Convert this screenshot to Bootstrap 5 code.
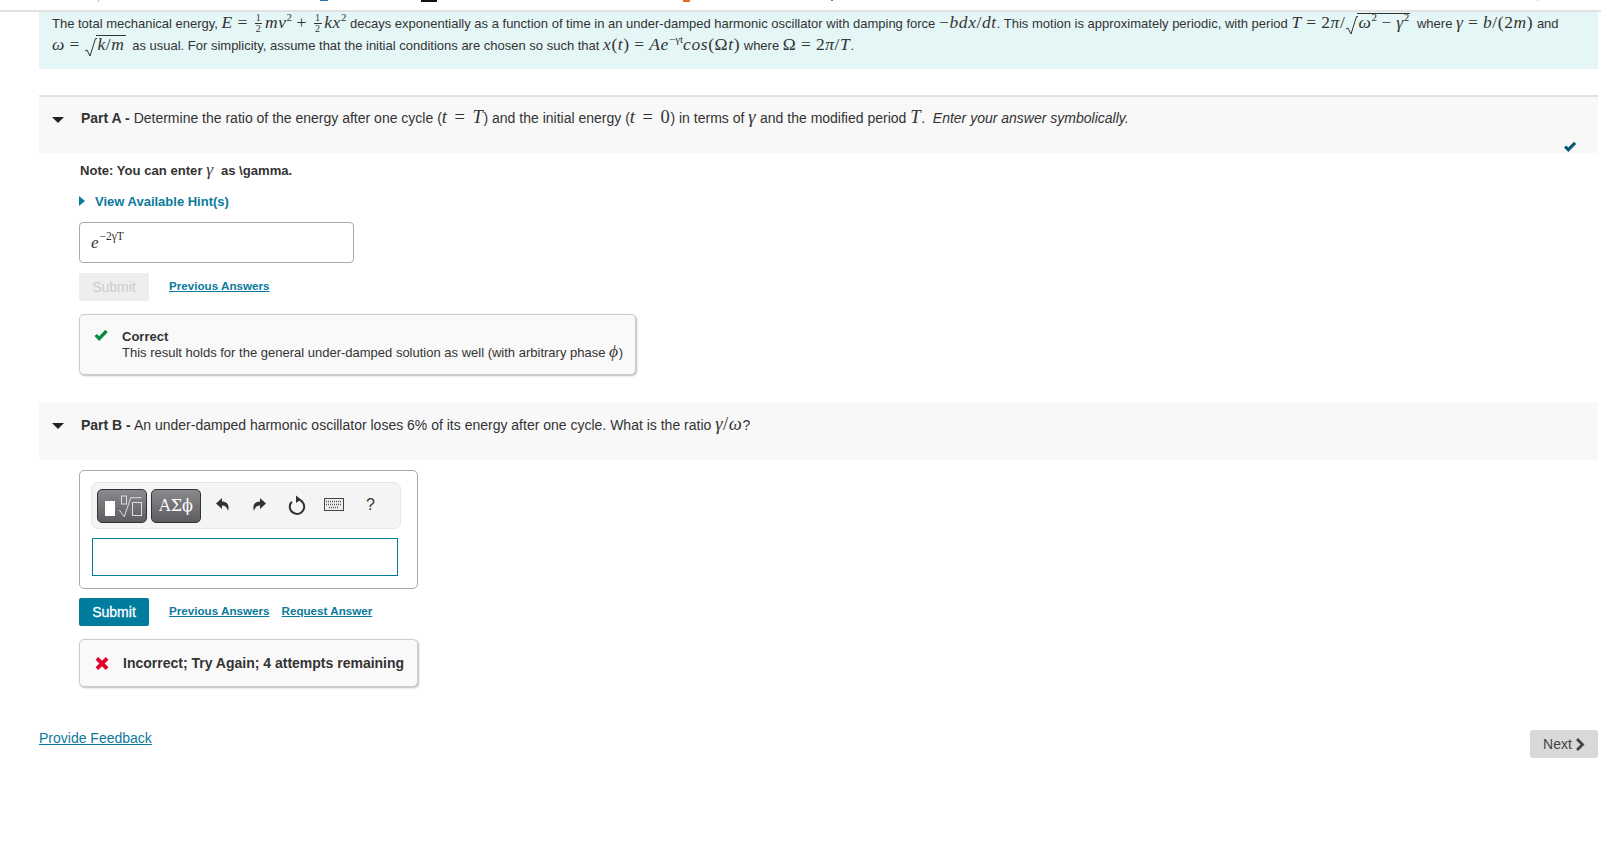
<!DOCTYPE html>
<html lang="en"><head><meta charset="utf-8"><title>Part</title>
<link href="https://cdn.jsdelivr.net/npm/bootstrap@5.3.0/dist/css/bootstrap.min.css" rel="stylesheet">
<style>
html,body{background:#fff;height:100%}
body{font-family:"Liberation Sans",Arial,sans-serif;font-size:14px;color:#333;overflow:hidden}
.topstrip{height:12px;border-bottom:2px solid #e2e2e2}
.wrap-main{margin:0 3px 0 39px}
.intro{background:#e5f6f6;padding:1px 13px 0;height:57px;line-height:22px;font-size:13px}
.m{font-family:"Liberation Serif",serif;font-style:italic;font-size:17.5px;line-height:1;letter-spacing:.6px;color:#333;white-space:nowrap}
.m .u{font-style:normal}
.m .op{font-style:normal;margin:0 4.5px}
.m sup{font-size:11px;top:-.6em;font-style:normal;line-height:0;letter-spacing:0}
.frac{display:inline-flex;flex-direction:column;align-items:center;vertical-align:middle;font-size:10px;line-height:10px;font-style:normal;margin:-2px 2.500px}
.frac>span:first-child{border-bottom:1px solid #333;padding:0 1px}
.rad{display:inline-block;border-top:1px solid #333;line-height:16px;padding:0 1px;margin:-1px 3px -1px -1px}
.radsign{vertical-align:-5px;margin:-4px 0}
.parthead{background:#f8f8f8;height:58px;display:flex;align-items:flex-start;padding:10px 0 0 13px;font-size:14px;line-height:22px;position:relative}
.parthead .op{margin:0 7px}
.parthead .m{line-height:0;font-size:18.5px}
.parta{border-top:2px solid #e2e2e2;margin-top:26px}
.partb{margin-top:27px;padding-top:12px}
.caret-d{width:0;height:0;border-left:6px solid transparent;border-right:6px solid transparent;border-top:6px solid #222;margin:10px 17px 0 0;flex:none}
.partb .caret-d{margin-top:9px}
.caret-r{width:0;height:0;border-top:5px solid transparent;border-bottom:5px solid transparent;border-left:6px solid #0a7a9c;display:inline-block;margin-right:10px}
.partbody{padding:0 0 0 40px}
.oktick{position:absolute;right:21px;top:44px}
.notev{font-weight:700;font-size:13.1px;line-height:18px;margin:9px 0 0 1px}
.notev .m{line-height:0}
.hint{font-weight:700;font-size:13px;color:#0a7a9c;line-height:18px;margin-top:13px}
.ansbox{width:275px;height:41px;border:1px solid #aaa;border-radius:4px;margin-top:11px;padding:10px 11px 0}
.ansbox .m{font-size:17px;letter-spacing:0}
.ansbox .m sup{top:-.72em;font-size:11.500px;margin-left:1px}
.btnp{width:70px;height:28px;padding:0;font-size:14px;border-radius:2px;border:0;line-height:28px;font-family:inherit}
.btn-sub{background:#007c9f;color:#fff;-webkit-text-stroke:.3px #fff}
.btn-sub:hover{background:#007c9f;color:#fff}
.btn-dis{background:#eee;color:#ccc}
.lnk{color:#0a7a9c;font-weight:700;font-size:11.65px;margin-bottom:2px}
.rowb{display:flex;align-items:center;margin-top:10px;height:28px}
.rowb.tight{margin-top:9px}
.rowb .lnk{margin-left:20px}
.rowb .lnk+.lnk{margin-left:12px}
.fb{border:1px solid #ccc;border-radius:5px;background:#f9f9f9;box-shadow:1px 1px 2px #bbb;display:flex}
.fb-ok{width:557px;height:61px;margin-top:13px;padding:14px 0 0 13px;font-size:13px;line-height:16px}
.fb-ok .m{line-height:0}
.fb-ok .txt{margin-left:5px}
.fb-bad{width:339px;height:48px;margin-top:13px;padding:0 0 0 14px;align-items:center;font-size:14px;font-weight:700}
.fb-bad .txt{margin-left:5px}
.editor{width:339px;height:119px;border:1px solid #aaa;border-radius:5px;margin-top:10px;padding:11px 11px 0 11px}
.tbar{background:#f4f4f4;border:1px solid #e6e6e6;border-radius:7px;height:47px;width:310px;display:flex;align-items:center;padding:0 0 0 5px}
.palbtn{width:50px;height:34px;border:1px solid #333;border-radius:5px;background:linear-gradient(#8a8a8e,#5d5d61);display:flex;align-items:center;justify-content:center;color:#fff;margin-right:4px;font-family:"DejaVu Serif",serif;font-size:16px;flex:none}
.palbtn+.palbtn{margin-right:3px}
.tool{width:37px;display:flex;justify-content:center;align-items:center;flex:none;color:#333;margin-top:-2px}
.tool.q{font-size:16px}
.mathin{width:306px;height:38px;border:1px solid #007c9f;margin-top:9px;margin-left:1px;background:#fff}
.foot{display:flex;justify-content:space-between;align-items:flex-start;margin-top:42px}
.fblink{color:#0a7a9c;font-size:14px;line-height:19px}
.nextb{width:68px;height:28px;margin-top:1px;background:#d9d9d9;color:#444;border-radius:3px;display:flex;align-items:center;justify-content:center;gap:4px;font-size:14px}
.topbits{display:flex;height:2px;align-items:flex-start}
.bit{display:block;height:2px;flex:none}
.b1{margin-left:98px;width:1px;background:#b9b3e8}
.b2{margin-left:221px;width:8px;height:1px;background:#1f78b4}
.b3{margin-left:93px;width:16px;background:#111}
.b4{margin-left:246px;width:7px;background:#f26522}
.b5{margin-left:141px;width:2px;height:1px;background:#7a6fd0}
.b6{margin-left:704px;width:1px;height:1px;background:#bbb}
</style></head><body>
<div class="topstrip"><div class="topbits"><span class="bit b1"></span><span class="bit b2"></span><span class="bit b3"></span><span class="bit b4"></span><span class="bit b5"></span><span class="bit b6"></span></div></div>
<div class="wrap-main">
<div class="intro">The total mechanical energy, <span class="m">E<span class="op">=</span><span class="frac"><span>1</span><span>2</span></span>mv<sup>2</sup><span class="op">+</span><span class="frac"><span>1</span><span>2</span></span>kx<sup>2</sup></span> decays exponentially as a function of time in an under-damped harmonic oscillator with damping force <span class="m"><span class="u">−</span>bdx<span class="u">/</span>dt</span>. This motion is approximately periodic, with period <span class="m">T<span class="op">=</span><span class="u">2</span>π<span class="u">/</span><svg class="radsign" width="13" height="21" viewBox="0 0 13 21"><path d="M1 13l2-1 3 6L11.500.5H13" fill="none" stroke="#333"/></svg><span class="rad">ω<sup>2</sup><span class="op">−</span>γ<sup>2</sup></span></span> where <span class="m">γ<span class="op">=</span>b<span class="u">/(2</span>m<span class="u">)</span></span> and<br><span class="m">ω<span class="op">=</span><svg class="radsign" width="13" height="21" viewBox="0 0 13 21"><path d="M1 13l2-1 3 6L11.500.5H13" fill="none" stroke="#333"/></svg><span class="rad">k<span class="u">/</span>m</span></span> as usual. For simplicity, assume that the initial conditions are chosen so such that <span class="m">x<span class="u">(</span>t<span class="u">)</span><span class="op">=</span>Ae<sup>−γt</sup>cos<span class="u">(Ω</span>t<span class="u">)</span></span> where <span class="m"><span class="u">Ω</span><span class="op">=</span><span class="u">2</span>π<span class="u">/</span>T</span>.</div>

<div class="parthead parta"><span class="caret-d"></span><div><b>Part A -</b> Determine the ratio of the energy after one cycle (<span class="m">t<span class="op">=</span>T</span>) and the initial energy (<span class="m">t<span class="op">=</span><span class="u">0</span></span>) in terms of <span class="m">γ</span> and the modified period <span class="m">T</span>. &nbsp;<i>Enter your answer symbolically.</i></div>
<svg class="oktick" width="14" height="12" viewBox="0 0 14 12"><path d="M1 6.500 3.200 4.500 5.300 6.600 11 .8 13.200 3 5.300 11z" fill="#04586f"/></svg></div>
<div class="partbody">
<div class="notev">Note: You can enter <span class="m fw-normal">γ</span> &nbsp;as \gamma.</div>
<div class="hint"><span class="caret-r"></span>View Available Hint(s)</div>
<div class="ansbox"><span class="m">e<sup>−2γT</sup></span></div>
<div class="rowb"><button class="btnp btn-dis" disabled>Submit</button><a class="lnk" href="#">Previous Answers</a></div>
<div class="fb fb-ok"><svg width="16" height="13" viewBox="0 0 14 12" class="flex-none me-2"><path d="M1 6.500 3.200 4.500 5.300 6.600 11 .8 13.200 3 5.300 11z" fill="#0a8a3c"/></svg><div class="txt"><b>Correct</b><br>This result holds for the general under-damped solution as well (with arbitrary phase <span class="m">ϕ</span>)</div></div>
</div>
<div class="parthead partb"><span class="caret-d"></span><div><b>Part B -</b> An under-damped harmonic oscillator loses 6% of its energy after one cycle. What is the ratio <span class="m">γ<span class="u">/</span>ω</span>?</div></div>
<div class="partbody">
<div class="editor">
<div class="tbar">
<div class="palbtn"><svg width="44" height="30" viewBox="0 0 44 30"><rect x="5" y="10" width="10" height="15" fill="#fff"/><rect x="21.500" y="5" width="5" height="8" fill="none" stroke="#ddd"/><path d="M19.300 19l5 6.700L30.700 6.700h11" fill="none" stroke="#ddd"/><rect x="32.500" y="11.500" width="9" height="13" fill="none" stroke="#ddd"/></svg></div>
<div class="palbtn">ΑΣϕ</div>
<div class="tool"><svg width="15" height="15" viewBox="0 0 15 15"><path d="M7 1 1 6.500 7 12V8.500c3 0 5 1.500 6 5.500 2-6-1-9.500-6-9.500z" fill="#333"/></svg></div>
<div class="tool"><svg width="15" height="15" viewBox="0 0 15 15"><path d="M8 1l6 5.500L8 12V8.500c-3 0-5 1.500-6 5.500C0 8 3 4.500 8 4.500z" fill="#333"/></svg></div>
<div class="tool"><svg width="18" height="20" viewBox="0 0 18 20"><path d="M9 4.500a7.200 7.200 0 1 1-5.200 2.200" fill="none" stroke="#333" stroke-width="2"/><path d="M8 .5l5 4-5 3.500z" fill="#333"/></svg></div>
<div class="tool"><svg width="20" height="13" viewBox="0 0 20 13"><rect x=".5" y=".5" width="19" height="12" fill="#eee" stroke="#444"/><path d="M2 3.500h16M2 6.500h16M5 9.500h10" stroke="#555" stroke-dasharray="1 1" stroke-width="1.300"/></svg></div>
<div class="tool q">?</div>
</div>
<div class="mathin"></div>
</div>
<div class="rowb tight"><button class="btn btnp btn-sub">Submit</button><a class="lnk" href="#">Previous Answers</a><a class="lnk" href="#">Request Answer</a></div>
<div class="fb fb-bad"><svg width="16" height="15" viewBox="0 0 14 14" class="me-2"><path d="M1 3.500 3.500 1 7 4.500 10.500 1 13 3.500 9.500 7 13 10.500 10.500 13 7 9.500 3.500 13 1 10.500 4.500 7z" fill="#e3002b"/></svg><span class="txt">Incorrect; Try Again; 4 attempts remaining</span></div>
</div>
<div class="foot"><a class="fblink" href="#">Provide Feedback</a><div class="nextb">Next <svg width="9" height="13" viewBox="0 0 9 13"><path d="M2 0 8.500 6.500 2 13 0 11 4.500 6.500 0 2z" fill="#444"/></svg></div></div>
</div>
<script src="https://cdn.jsdelivr.net/npm/bootstrap@5.3.0/dist/js/bootstrap.bundle.min.js"></script>
</body></html>
